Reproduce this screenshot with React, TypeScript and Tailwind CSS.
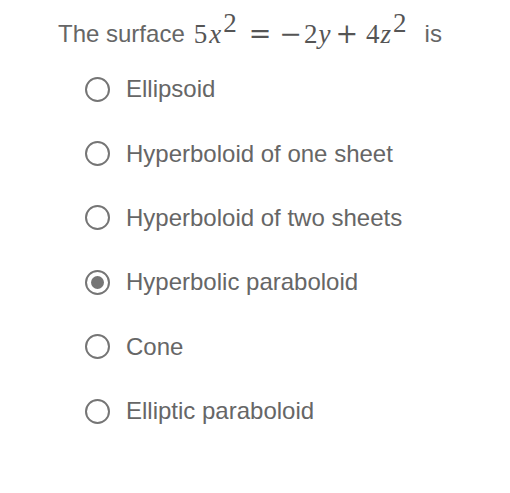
const options = [
  'Ellipsoid',
  'Hyperboloid of one sheet',
  'Hyperboloid of two sheets',
  'Hyperbolic paraboloid',
  'Cone',
  'Elliptic paraboloid',
];

function Radio({ checked }: { checked: boolean }) {
  return (
    <span className="flex h-[25px] w-[25px] shrink-0 items-center justify-center rounded-full border-2 border-[#757575] bg-white">
      {checked && <span className="h-[13px] w-[13px] rounded-full bg-[#757575]" />}
    </span>
  );
}

export default function App() {
  const selected = 3;
  return (
    <div className="h-[493px] w-[510px] bg-white font-['Liberation_Sans',Arial,sans-serif] text-[#666666]">
      <div className="flex h-[66px] items-center pl-[58px] pt-[2px] text-[24px]">
        <span>The surface</span>
        <span className="ml-[9px] flex items-baseline font-['Liberation_Serif',serif] text-[27px] text-[#555]">
          <span>5</span>
          <i className="ml-[2px]">x</i>
          <span className="relative top-[-11px] ml-[2px]">2</span>
          <span className="ml-[12px] font-['DejaVu_Serif',serif]">=</span>
          <span className="ml-[8px] font-['DejaVu_Serif',serif]">−</span>
          <span className="ml-[2px]">2</span>
          <i className="ml-[1px]">y</i>
          <span className="ml-[5px] font-['DejaVu_Serif',serif]">+</span>
          <span className="ml-[8px]">4</span>
          <i className="ml-[1px]">z</i>
          <span className="relative top-[-11px] ml-[2px]">2</span>
        </span>
        <span className="ml-[18px]">is</span>
      </div>
      <div className="-mt-[9px] flex flex-col pl-[85px]">
        {options.map((o, i) => (
          <label key={o} className="flex h-[64.4px] items-center gap-[16px] text-[24px]">
            <Radio checked={i === selected} />
            <span>{o}</span>
          </label>
        ))}
      </div>
    </div>
  );
}
